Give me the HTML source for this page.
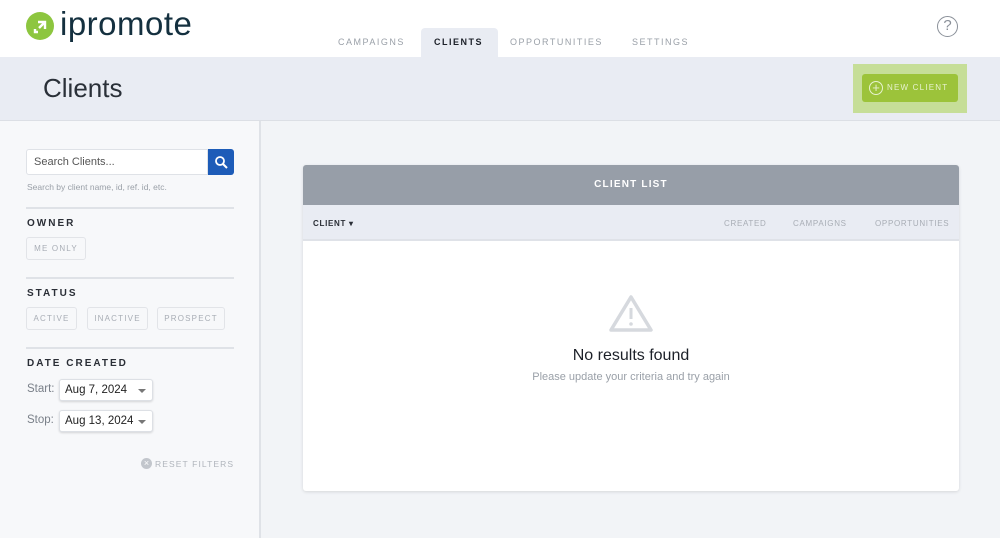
<!DOCTYPE html>
<html><head><style>
*{margin:0;padding:0;box-sizing:border-box}
body{width:1000px;height:538px;overflow:hidden;font-family:"Liberation Sans",sans-serif;background:#f2f4f7;position:relative}
.a{position:absolute}
.sp{letter-spacing:1.5px;font-size:9px;text-transform:uppercase}
.chip{position:absolute;height:23px;border:1px solid #e2e4e8;border-radius:3px;background:#f7f8fa;color:#a8adb5;font-size:8px;letter-spacing:1.2px;line-height:21px;text-align:center}
.hr{position:absolute;left:26px;width:208px;height:2px;background:#dfe2e7}
.h{position:absolute;left:27px;font-size:10px;font-weight:bold;letter-spacing:2px;color:#2a2e36}
.sel{position:absolute;left:59px;width:94px;height:22px;background:#fff;border:1px solid #dde0e5;border-radius:3px;box-shadow:0 1px 2px rgba(0,0,0,.15);font-size:11.5px;color:#222;line-height:20px;padding-left:5px}
.sel:after{content:"";position:absolute;right:6px;top:9px;border:4px solid transparent;border-top:4px solid #777}
</style></head><body>
<div class="a" style="left:0;top:0;width:1000px;height:57px;background:#fff"></div>
<div class="a" style="left:26px;top:12px;width:28px;height:28px;border-radius:50%;background:#8dc63f"></div>
<svg class="a" style="left:26px;top:12px" width="28" height="28"><path d="M12 10h7v7M19 10l-6 6M9 17v3h3" stroke="#fff" stroke-width="2.4" fill="none"/></svg>
<div class="a" style="left:60px;top:5px;font-size:33px;color:#14303f;letter-spacing:0.5px">ipromote</div>
<div class="a" style="left:421px;top:28px;width:77px;height:30px;background:#e9ecf3;border-radius:4px 4px 0 0"></div>
<div class="a sp" style="left:338px;top:37px;color:#9aa0a8">Campaigns</div>
<div class="a sp" style="left:434px;top:37px;color:#1c2028;font-weight:bold">Clients</div>
<div class="a sp" style="left:510px;top:37px;color:#9aa0a8">Opportunities</div>
<div class="a sp" style="left:632px;top:37px;color:#9aa0a8">Settings</div>
<div class="a" style="left:937px;top:16px;width:21px;height:21px;border:1.5px solid #8a9099;border-radius:50%;color:#8a9099;font-size:15px;text-align:center;line-height:18px">?</div>
<div class="a" style="left:0;top:57px;width:1000px;height:64px;background:#e9ecf3;border-bottom:1px solid #dcdfe5"></div>
<div class="a" style="left:43px;top:73px;font-size:26px;color:#2a3038">Clients</div>
<div class="a" style="left:853px;top:64px;width:114px;height:49px;background:#c6de98"></div>
<div class="a" style="left:862px;top:74px;width:96px;height:28px;background:#9cc33a;border-radius:3px"></div>
<div class="a" style="left:869px;top:81px;width:14px;height:14px;border:1.5px solid #e7f2cf;border-radius:50%;color:#e7f2cf;font-size:13px;line-height:11px;text-align:center">+</div>
<div class="a" style="left:887px;top:83px;font-size:8px;letter-spacing:1.2px;color:#e7f2cf">NEW CLIENT</div>
<div class="a" style="left:0;top:121px;width:261px;height:417px;background:#f7f8fa;border-right:2px solid #dfe2e7"></div>
<div class="a" style="left:26px;top:149px;width:182px;height:26px;background:#fff;border:1px solid #dfe2e7;border-radius:3px 0 0 3px;font-size:11px;color:#555;line-height:24px;padding-left:7px">Search Clients...</div>
<div class="a" style="left:208px;top:149px;width:26px;height:26px;background:#1d5cb8;border-radius:0 3px 3px 0"></div>
<svg class="a" style="left:208px;top:149px" width="26" height="26"><circle cx="12" cy="12" r="4" stroke="#fff" stroke-width="1.8" fill="none"/><path d="M15 15l4 4" stroke="#fff" stroke-width="2"/></svg>
<div class="a" style="left:27px;top:182px;font-size:8.5px;color:#9aa0a8">Search by client name, id, ref. id, etc.</div>
<div class="hr" style="top:207px"></div>
<div class="h" style="top:218px">OWNER</div>
<div class="chip" style="left:26px;top:237px;width:60px">ME ONLY</div>
<div class="hr" style="top:277px"></div>
<div class="h" style="top:288px">STATUS</div>
<div class="chip" style="left:26px;top:307px;width:51px">ACTIVE</div>
<div class="chip" style="left:87px;top:307px;width:61px">INACTIVE</div>
<div class="chip" style="left:157px;top:307px;width:68px">PROSPECT</div>
<div class="hr" style="top:347px"></div>
<div class="h" style="top:358px">DATE CREATED</div>
<div class="a" style="left:27px;top:383px;font-size:11.5px;color:#7a8089">Start:</div>
<div class="sel" style="top:379px">Aug 7, 2024</div>
<div class="a" style="left:27px;top:414px;font-size:11.5px;color:#7a8089">Stop:</div>
<div class="sel" style="top:410px">Aug 13, 2024</div>
<div class="a" style="left:141px;top:458px;width:11px;height:11px;border-radius:50%;background:#c2c6cc;color:#fff;font-size:9px;line-height:11px;text-align:center">×</div>
<div class="a" style="left:155px;top:459px;font-size:8.5px;letter-spacing:1.1px;color:#b0b5bc">RESET FILTERS</div>
<div class="a" style="left:303px;top:165px;width:656px;height:326px;background:#fff;border-radius:3px;box-shadow:0 1px 3px rgba(0,0,0,.12);overflow:hidden">
<div style="height:40px;background:#979ea8;color:#fff;font-size:10px;font-weight:bold;letter-spacing:1.2px;text-align:center;line-height:40px">CLIENT LIST</div>
<div style="height:36px;background:#e9ecf3;border-bottom:2px solid #dfe2e8;position:relative;font-size:8px;letter-spacing:0.7px;color:#a8adb5">
<span class="a" style="left:10px;top:14px;color:#2a2e36;font-weight:bold">CLIENT ▾</span>
<span class="a" style="left:421px;top:14px">CREATED</span>
<span class="a" style="left:490px;top:14px">CAMPAIGNS</span>
<span class="a" style="left:572px;top:14px">OPPORTUNITIES</span>
</div></div>
<svg class="a" style="left:608px;top:293px" width="46" height="40"><path d="M23 4L43 37H3Z" stroke="#d6d9de" stroke-width="3.5" fill="none" stroke-linejoin="round"/><path d="M23 15v11" stroke="#d6d9de" stroke-width="3"/><circle cx="23" cy="31" r="1.8" fill="#d6d9de"/></svg>
<div class="a" style="left:303px;top:347px;width:656px;text-align:center;font-size:16px;color:#1c2028">No results found</div>
<div class="a" style="left:303px;top:371px;width:656px;text-align:center;font-size:11px;color:#9aa0a8">Please update your criteria and try again</div>
</body></html>
